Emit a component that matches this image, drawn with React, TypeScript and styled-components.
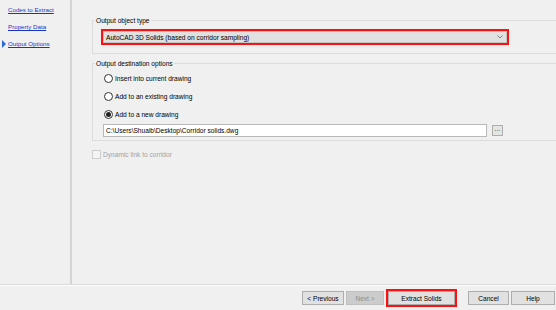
import React from "react"
import styled, { createGlobalStyle } from "styled-components"

const GlobalStyle = createGlobalStyle`
  html, body {
    margin: 0;
    padding: 0;
    background: #f0f0f0;
  }
  * {
    box-sizing: border-box;
  }
`

const font = `"Liberation Sans", Arial, sans-serif`

const Window = styled.div`
  width: 556px;
  height: 310px;
  display: flex;
  flex-direction: column;
  background: #f0f0f0;
  font-family: ${font};
  font-size: 6.6px;
  color: #000;
  overflow: hidden;
`

const Body = styled.div`
  display: flex;
  height: 285px;
  border-bottom: 1px solid #d8d8d8;
`

const Nav = styled.div`
  width: 72px;
  flex-shrink: 0;
  border-right: 2px solid #d4d4d4;
  display: flex;
  flex-direction: column;
  gap: 8px;
  padding: 5px 0 0 8px;
`

const NavLink = styled.a<{ $active?: boolean }>`
  position: relative;
  color: #1b34c8;
  text-decoration: underline;
  font-size: 6.2px;
  line-height: 9px;
  cursor: pointer;

  &::before {
    content: "";
    display: ${p => (p.$active ? "block" : "none")};
    position: absolute;
    left: -6px;
    top: 1px;
    border-left: 4px solid #2a6ad8;
    border-top: 4px solid transparent;
    border-bottom: 4px solid transparent;
  }
`

const Main = styled.div`
  flex: 1;
  padding: 16px 0 0 20px;
  display: flex;
  flex-direction: column;
  overflow: hidden;
`

const GroupBox = styled.fieldset<{ $height: number }>`
  margin: 0 -30px 0 0;
  height: ${p => p.$height}px;
  border: 1px solid #dcdcdc;
  border-radius: 0;
  padding: 0 8px 0 8px;
  position: relative;

  & + & {
    margin-top: 5px;
  }
`

const Legend = styled.legend`
  padding: 0 1px;
  margin-left: -6px;
  line-height: 9px;
  color: #000;
`

const Select = styled.div`
  margin: 4px 0 0 0;
  width: 408px;
  height: 16px;
  border: 2px solid #ff1010;
  display: flex;
  align-items: center;
  justify-content: space-between;
  padding: 0 4px 0 3px;
  background: #e1e1e1;
  box-shadow: inset 0 0 0 1px #c4c4c4;
`

const Chevron = styled.svg`
  width: 6px;
  height: 4px;
`

const Radios = styled.div`
  display: flex;
  flex-direction: column;
  gap: 9px;
  padding: 6px 0 0 3px;
`

const RadioRow = styled.label`
  display: flex;
  align-items: center;
  gap: 2px;
  line-height: 9px;
`

const RadioDot = styled.span<{ $checked?: boolean }>`
  width: 9px;
  height: 9px;
  border-radius: 50%;
  border: 1px solid #333;
  background: #fff;
  display: flex;
  align-items: center;
  justify-content: center;

  &::after {
    content: "";
    display: ${p => (p.$checked ? "block" : "none")};
    width: 5px;
    height: 5px;
    border-radius: 50%;
    background: #222;
  }
`

const PathRow = styled.div`
  display: flex;
  align-items: center;
  gap: 5px;
  margin: 5px 0 0 2px;
`

const PathInput = styled.div`
  width: 384px;
  height: 13px;
  background: #fff;
  border: 1px solid #b8b8b8;
  padding: 0 2px;
  line-height: 11px;
`

const Ellipsis = styled.div`
  width: 11px;
  height: 11px;
  border: 1px solid #adadad;
  background: #e5e5e5;
  display: flex;
  align-items: center;
  justify-content: center;
  font-size: 7px;
  line-height: 4px;
  padding-bottom: 3px;
  color: #333;
`

const CheckRow = styled.label`
  display: flex;
  align-items: center;
  gap: 2px;
  margin-top: 9px;
  color: #a3a3a3;
  line-height: 9px;
`

const CheckBox = styled.span`
  width: 9px;
  height: 9px;
  border: 1px solid #cccccc;
  background: #f4f4f4;
`

const Footer = styled.div`
  flex: 1;
  display: flex;
  align-items: center;
  justify-content: flex-end;
  padding: 0 1px 0 0;
  border-top: 1px solid #ffffff;
`

const ButtonGroup = styled.div`
  display: flex;
  align-items: center;
  gap: 2px;

  & + & {
    margin-left: 11px;
  }
`

const Button = styled.div<{ $disabled?: boolean; $highlight?: boolean; $width: number }>`
  width: ${p => p.$width}px;
  height: ${p => (p.$highlight ? 18 : 14)}px;
  display: flex;
  align-items: center;
  justify-content: center;
  background: ${p => (p.$disabled ? "#cccccc" : "#e1e1e1")};
  border: ${p => (p.$highlight ? "2px solid #ff1010" : `1px solid ${p.$disabled ? "#bfbfbf" : "#adadad"}`)};
  box-shadow: ${p => (p.$highlight ? "inset 0 0 0 1px #adadad" : "none")};
  color: ${p => (p.$disabled ? "#8d8d8d" : "#000")};
`

export default function App() {
  return (
    <Window>
      <GlobalStyle />
      <Body>
        <Nav>
          <NavLink>Codes to Extract</NavLink>
          <NavLink>Property Data</NavLink>
          <NavLink $active>Output Options</NavLink>
        </Nav>
        <Main>
          <GroupBox $height={38}>
            <Legend>Output object type</Legend>
            <Select>
              <span>AutoCAD 3D Solids (based on corridor sampling)</span>
              <Chevron viewBox="0 0 6 4">
                <path d="M0.5 0.5 L3 3 L5.5 0.5" fill="none" stroke="#777" strokeWidth="0.9" />
              </Chevron>
            </Select>
          </GroupBox>
          <GroupBox $height={82}>
            <Legend>Output destination options</Legend>
            <Radios>
              <RadioRow>
                <RadioDot />
                Insert into current drawing
              </RadioRow>
              <RadioRow>
                <RadioDot />
                Add to an existing drawing
              </RadioRow>
              <RadioRow>
                <RadioDot $checked />
                Add to a new drawing
              </RadioRow>
            </Radios>
            <PathRow>
              <PathInput>C:\Users\Shuaib\Desktop\Corridor solids.dwg</PathInput>
              <Ellipsis>...</Ellipsis>
            </PathRow>
          </GroupBox>
          <CheckRow>
            <CheckBox />
            Dynamic link to corridor
          </CheckRow>
        </Main>
      </Body>
      <Footer>
        <ButtonGroup>
          <Button $width={42}>&lt; Previous</Button>
          <Button $width={38} $disabled>Next &gt;</Button>
          <Button $width={71} $highlight>Extract Solids</Button>
        </ButtonGroup>
        <ButtonGroup>
          <Button $width={41}>Cancel</Button>
          <Button $width={44}>Help</Button>
        </ButtonGroup>
      </Footer>
    </Window>
  )
}
